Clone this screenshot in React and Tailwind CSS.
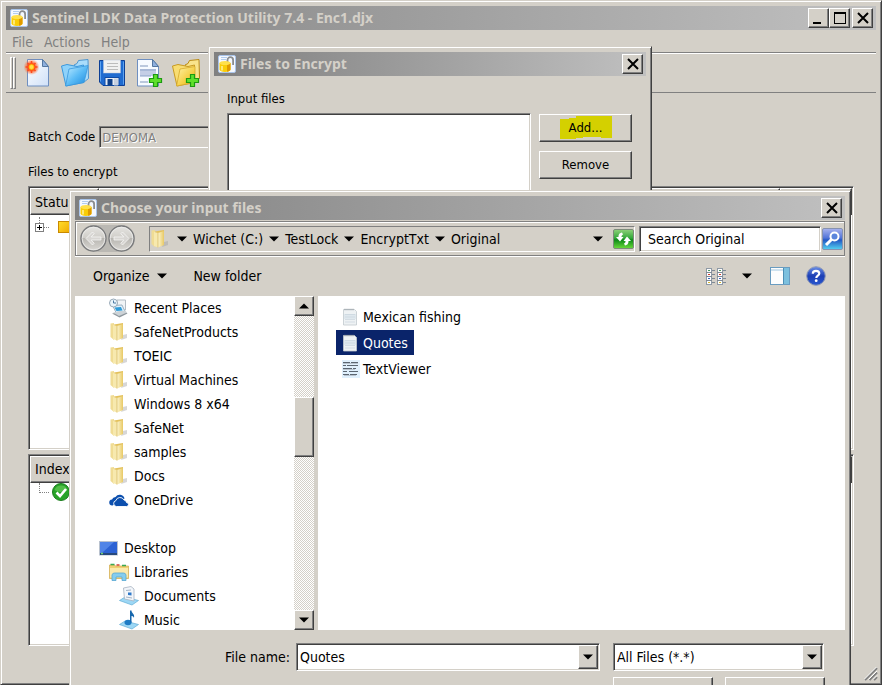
import React, { useState } from 'react';
import clsx from 'clsx';

const RAISED = 'border border-t-white border-l-white border-r-[#404040] border-b-[#404040] shadow-[inset_-1px_-1px_0_#808080]';
const SUNKEN = 'border border-t-[#808080] border-l-[#808080] border-r-white border-b-white shadow-[inset_1px_1px_0_#404040,inset_-1px_-1px_0_#d4d0c8]';
const THIN = 'border border-t-[#808080] border-l-[#808080] border-r-white border-b-white';

/* ---------- icons ---------- */

const AppIcon = () => (
  <svg viewBox="0 0 18 18" className="w-[18px] h-[18px] shrink-0">
    <rect x="0.5" y="0.5" width="17" height="17" rx="1.5" fill="#f4f8ff" stroke="#a9c4ea" />
    <path d="M3 2.500h6M3 4.500h5" stroke="#b3cdee" />
    <path d="M9.500 7.500V5a2.800 2.800 0 0 1 5.600 0v5" fill="none" stroke="#8b8d90" strokeWidth="1.800" />
    <path d="M1.500 8v6.500c0 1.400 2.500 2.500 5.500 2.500s5.500-1.100 5.500-2.500V8z" fill="#f9cd08" />
    <path d="M9 9.500v7.300c2-.4 3.500-1.300 3.500-2.300V8z" fill="#e09a00" />
    <ellipse cx="7" cy="8" rx="5.500" ry="2.100" fill="#ffe04a" />
    <path d="M4 11v4.500" stroke="#fff09a" strokeWidth="1.500" />
  </svg>
);

const CloseGlyph = () => (
  <svg viewBox="0 0 12 12" className="w-3 h-3">
    <path d="M1 1l10 10M11 1L1 11" stroke="#000" strokeWidth="2" />
  </svg>
);

const MinGlyph = () => (
  <svg viewBox="0 0 12 12" className="w-3 h-3">
    <path d="M0 11h8" stroke="#000" strokeWidth="2" />
  </svg>
);

const MaxGlyph = () => (
  <svg viewBox="0 0 12 12" className="w-3 h-3" shapeRendering="crispEdges">
    <path d="M0.500 1v10.500h11V1" fill="none" stroke="#000" />
    <path d="M0 1h12" stroke="#000" strokeWidth="2" />
  </svg>
);

const Caret = ({ up }) => (
  <svg viewBox="0 0 10 6" className={clsx('w-[10px] h-[6px] shrink-0', up && 'rotate-180')}>
    <path d="M0 0.500h10L5 5.500z" fill="#000" />
  </svg>
);

const GreenPlus = () => (
  <path d="M18.500 15.500h4v4h4v4h-4v4h-4v-4h-4v-4h4z" fill="#5fe02c" stroke="#1d9a12" strokeWidth="1.200" />
);

const NewFileIcon = () => (
  <svg viewBox="0 0 28 28" className="w-7 h-7">
    <defs>
      <linearGradient id="newPaper" x1="0" y1="0" x2="1" y2="1">
        <stop offset="0" stopColor="#fff" />
        <stop offset="1" stopColor="#cfe0f8" />
      </linearGradient>
      <radialGradient id="spark">
        <stop offset="0.400" stopColor="#ff5a1c" />
        <stop offset="1" stopColor="#ff5a1c" stopOpacity="0" />
      </radialGradient>
    </defs>
    <path d="M3.500 .500h15l6 7v19.500h-21z" fill="url(#newPaper)" stroke="#6f8fc0" />
    <path d="M18.500 .500v7h6z" fill="#8fb0de" stroke="#55779f" />
    <circle cx="7.500" cy="8" r="8" fill="url(#spark)" />
    <path d="M7.500 2v12M1.500 8h12M3.500 4l8 8M11.500 4l-8 8" stroke="#ff4a1c" strokeWidth="1.500" />
    <circle cx="7.500" cy="8" r="3.500" fill="#ffb300" stroke="#ff4a1c" />
    <circle cx="7.500" cy="8" r="2" fill="#ffe14a" />
  </svg>
);

const OpenIcon = () => (
  <svg viewBox="0 0 28 28" className="w-7 h-7">
    <defs>
      <linearGradient id="openBlue" x1="0" y1="0" x2="1" y2="1">
        <stop offset="0" stopColor="#c3edff" />
        <stop offset="0.500" stopColor="#5cbcf6" />
        <stop offset="1" stopColor="#1887dc" />
      </linearGradient>
    </defs>
    <path d="M13 6l3-1.500 1.500-3L27 .500l.5 19-5 4z" fill="#a9dcfb" stroke="#4d95cf" />
    <path d="M.500 7L6 5.500 16 7.500 22.500 6v17.500L5 27z" fill="#8ed2fa" stroke="#3b98dc" />
    <path d="M4.500 27L8 10l19-3.500-4 17z" fill="url(#openBlue)" stroke="#3b98dc" strokeWidth=".8" />
  </svg>
);

const SaveIcon = () => (
  <svg viewBox="0 0 28 28" className="w-7 h-7">
    <path d="M1.500 1.500h25v25H5l-3.500-3.500z" fill="#1f6bd0" stroke="#0d3f95" />
    <path d="M2.500 2.500v20M25.500 2.500v23" stroke="#5ea3f0" />
    <rect x="5.500" y="1" width="17" height="13" fill="#f1f1f1" stroke="#b9c4d6" strokeWidth=".5" />
    <path d="M9 4.500h11M9 7.500h11M9 10.500h11" stroke="#bcbcbc" />
    <path d="M7 18.500h14v8H7z" fill="#e7edf5" stroke="#0f4ba5" />
    <path d="M9.500 20h5v6.500h-5z" fill="#0f4088" />
    <path d="M16 19.500h4v7h-4z" fill="#c6d0df" />
  </svg>
);

const AddFileIcon = () => (
  <svg viewBox="0 0 28 28" className="w-7 h-7">
    <path d="M2.500 .500h15l6 7v19.500h-21z" fill="#f6faff" stroke="#6f8fc0" />
    <path d="M17.500 .500v7h6z" fill="#8fb0de" stroke="#55779f" />
    <path d="M5 7h8M5 23h8" stroke="#a8b8d2" strokeWidth="1.500" />
    <path d="M5 10h16v7H5z" fill="#c4cee6" />
    <path d="M5 11h16M5 17h11" stroke="#8da3c8" />
    <GreenPlus />
  </svg>
);

const AddFolderIcon = () => (
  <svg viewBox="0 0 28 28" className="w-7 h-7">
    <defs>
      <linearGradient id="folderGold" x1="0" y1="0" x2="1" y2="1">
        <stop offset="0" stopColor="#fff3a8" />
        <stop offset="0.600" stopColor="#f5cf45" />
        <stop offset="1" stopColor="#d9a013" />
      </linearGradient>
    </defs>
    <path d="M13 6l3-1.500 1.500-3L27 .500l.5 19-5 4z" fill="#f9e48c" stroke="#b98a15" />
    <path d="M.500 7L6 5.500 16 7.500 22.500 6v17.500L5 27z" fill="#f8dd72" stroke="#c89a22" />
    <path d="M4.500 27L8 10l15-2.500v16z" fill="url(#folderGold)" stroke="#d6a92c" strokeWidth=".8" />
    <GreenPlus />
  </svg>
);

const FolderIcon = () => (
  <svg viewBox="0 0 20 20" className="w-5 h-5 shrink-0">
    <defs>
      <linearGradient id="leaf" x1="0" y1="0" x2="1" y2="0">
        <stop offset="0" stopColor="#fdf6d0" />
        <stop offset="1" stopColor="#e8c965" />
      </linearGradient>
    </defs>
    <path d="M12 18l6-2v-4l-4 1z" fill="#9a9a9a" opacity=".4" />
    <path d="M1.500 1.500L5 1v17l-3.500-3z" fill="#f0dc94" />
    <path d="M5 2.500l9-1.500v14.500L8 18z" fill="#e3c15c" />
    <path d="M4 3l4 1v14.500L4 17z" fill="#f7e9ae" />
    <path d="M8 4l6-2v14l-6 2.500z" fill="url(#leaf)" />
    <path d="M8 4v14.500" stroke="#cfab4d" strokeWidth=".6" />
  </svg>
);

const RecentIcon = () => (
  <svg viewBox="0 0 20 20" className="w-5 h-5 shrink-0">
    <path d="M8 2h8.500v10H8z" fill="#f1f4f6" stroke="#b3bcc4" />
    <path d="M3.500 7.500L13 7l3 6.500-9 1z" fill="#dff0fb" stroke="#8ba1b2" strokeWidth=".8" />
    <path d="M5.500 9.500L12 9l1.500 3.500-6 .5z" fill="#2d9bd8" />
    <path d="M3 15.500l13-2 2.500 2-8 4z" fill="#8e979d" />
    <path d="M4 14.500l12-2 2 2-8 3.500z" fill="#cdd3d7" />
    <circle cx="4.500" cy="5" r="4" fill="#e9f4fb" stroke="#98a9b6" />
    <path d="M4.500 2.500V5H7" fill="none" stroke="#4a78a0" />
  </svg>
);

const OneDriveIcon = () => (
  <svg viewBox="0 0 20 20" className="w-5 h-5 shrink-0">
    <path d="M3.500 15.500a3 3 0 0 1-.5-6A3.800 3.800 0 0 1 6.500 7 5 5 0 0 1 15.500 8.500z" fill="#0c4fae" />
    <path d="M7.500 16.500a3 3 0 0 1-.6-5.900 4.300 4.300 0 0 1 8-.7 3 3 0 0 1 2.600 2.600 2 2 0 0 1 0 4z" fill="#0c4fae" stroke="#fff" strokeWidth=".9" />
  </svg>
);

const DesktopIcon = () => (
  <svg viewBox="0 0 20 20" className="w-5 h-5 shrink-0">
    <rect x=".5" y="3.500" width="18" height="13.500" fill="#2c62d4" stroke="#b9c2cf" />
    <path d="M1 4h14L3 15H1z" fill="#5f93f0" opacity=".7" />
    <path d="M1 16h17" stroke="#27497c" strokeWidth="2" />
    <path d="M2 15.500h2" stroke="#6fd06b" strokeWidth="1.500" />
  </svg>
);

const LibrariesIcon = () => (
  <svg viewBox="0 0 20 20" className="w-5 h-5 shrink-0">
    <path d="M.500 3h5l1 1h13v12.500H.500z" fill="#f0cf72" stroke="#d1aa4c" strokeWidth=".7" />
    <path d="M1.500 2.500h4M13 3.500h4" stroke="#3aa852" strokeWidth="1.500" />
    <path d="M7.500 3h3" stroke="#d6402f" strokeWidth="1.500" />
    <path d="M1 6h18v9.500H1z" fill="#fbe9ac" />
    <path d="M3 18.500v-5.500a2.500 2.500 0 0 1 2.500-2h9a2.500 2.500 0 0 1 2.500 2v5.500h-4V15H7v3.500z" fill="#86cdee" stroke="#58a7d2" strokeWidth=".8" />
  </svg>
);

const DocumentsIcon = () => (
  <svg viewBox="0 0 20 20" className="w-5 h-5 shrink-0">
    <path d="M.500 14.500L6 11l13.500 3.500-6.500 4.500z" fill="#9cd7f5" stroke="#62add6" strokeWidth=".7" />
    <path d="M4.500 2L12 .500l3 2.500v12L5.500 13z" fill="#f3f6fa" stroke="#a7b3c0" strokeWidth=".8" />
    <path d="M7 4.500l5-.500M7 11l6 1" stroke="#a4b4c6" />
    <path d="M9 6.500h3.500v3L9 9z" fill="#2f79c9" />
  </svg>
);

const MusicIcon = () => (
  <svg viewBox="0 0 20 20" className="w-5 h-5 shrink-0">
    <path d="M.500 14.500L6 11l13.500 3.500-6.500 4.500z" fill="#9cd7f5" stroke="#62add6" strokeWidth=".7" />
    <ellipse cx="9" cy="12.500" rx="3.500" ry="2.700" fill="#1c7bc4" />
    <path d="M11 12.500V.500h1.500c0 3 3.500 3 2.500 7.500-.5-1.500-1.500-2-2.500-2v6.500z" fill="#1767ad" />
  </svg>
);

const NotepadIcon = () => (
  <svg viewBox="0 0 16 18" className="w-4 h-[18px] shrink-0">
    <path d="M1.500 1.500h11l2 2v13.500h-13z" fill="#eef2f4" stroke="#c2c9ce" strokeWidth=".8" />
    <path d="M2 6h12v5H2z" fill="#dfe8ee" />
    <path d="M3 6.500h10M3 9h10M3 11.500h10M3 14h10" stroke="#c8d4dc" strokeWidth=".7" />
    <path d="M2.500 1.500h9" stroke="#8f979c" strokeWidth="1.500" strokeDasharray="1 1" />
  </svg>
);

const TextDocIcon = () => (
  <svg viewBox="0 0 18 18" className="w-[18px] h-[18px] shrink-0" shapeRendering="crispEdges">
    <rect width="18" height="18" fill="#e0f0fd" />
    <path d="M1 2.500h7M9 2.500h7M1 5.500h3M5 5.500h11M1 8.500h9M11 8.500h3M1 11.500h4M7 11.500h9M1 14.500h6M8 14.500h7" stroke="#5b6672" />
    <path d="M1 3.500h15M1 9.500h12M2 15.500h12" stroke="#b9c5d1" />
  </svg>
);

const NavArrow = ({ flip }) => (
  <svg viewBox="0 0 27 27" className={clsx('w-[27px] h-[27px]', flip && 'rotate-y-180')}>
    <defs>
      <linearGradient id="navGrey" x1="0" y1="0" x2="0" y2="1">
        <stop offset="0" stopColor="#e6e5e2" />
        <stop offset="0.490" stopColor="#cfcdc8" />
        <stop offset="0.500" stopColor="#b8b6b1" />
        <stop offset="1" stopColor="#dbd9d5" />
      </linearGradient>
    </defs>
    <circle cx="13.500" cy="13.500" r="12.500" fill="url(#navGrey)" stroke="#77787a" strokeWidth="1.300" />
    <circle cx="13.500" cy="13.500" r="11.300" fill="none" stroke="#eeeeec" strokeWidth=".8" />
    <path d="M6 13.500l6.500-6.500 1.700 1.700-3 3.300H21v3h-9.800l3 3.300-1.700 1.700z" fill="#d8d6d3" stroke="#f6f6f5" strokeWidth=".8" />
  </svg>
);

const RefreshIcon = () => (
  <svg viewBox="0 0 21 20" className="w-[21px] h-5">
    <defs>
      <linearGradient id="refreshGreen" x1="0" y1="0" x2="0" y2="1">
        <stop offset="0" stopColor="#8ed27a" />
        <stop offset="0.450" stopColor="#34a83a" />
        <stop offset="0.550" stopColor="#0d8a17" />
        <stop offset="1" stopColor="#6bdc3a" />
      </linearGradient>
    </defs>
    <rect x=".5" y=".5" width="20" height="19" rx="1.500" fill="url(#refreshGreen)" stroke="#7d8b7a" />
    <path d="M9 3.500C6 4 5.500 6 5.500 8H3l4 4.500L10.500 8H8.500c0-1.500.5-2 1.500-2.500z" fill="#fff" />
    <path d="M12 16.500c3-.5 3.500-2.500 3.500-4.500H18l-4-4.500L10.500 12h2c0 1.500-.5 2-1.500 2.500z" fill="#fff" />
  </svg>
);

const SearchIcon = () => (
  <svg viewBox="0 0 21 22" className="w-[21px] h-[22px]">
    <defs>
      <linearGradient id="searchBlue" x1="0" y1="0" x2="0" y2="1">
        <stop offset="0" stopColor="#a9b3ee" />
        <stop offset="0.450" stopColor="#5274d8" />
        <stop offset="0.550" stopColor="#2158c4" />
        <stop offset="1" stopColor="#55d3f2" />
      </linearGradient>
    </defs>
    <rect x=".5" y=".5" width="20" height="21" rx="1.500" fill="url(#searchBlue)" stroke="#8792b0" />
    <circle cx="12.500" cy="8.500" r="4" fill="#5c86dc" stroke="#fff" strokeWidth="2" />
    <path d="M9.500 11.500L4 17" stroke="#fff" strokeWidth="3" />
  </svg>
);

const ViewsIcon = () => (
  <svg viewBox="0 0 20 17" className="w-5 h-[17px]" shapeRendering="crispEdges">
    {[0, 11].map((x) => (
      <g key={x} transform={`translate(${x} 0)`}>
        <rect x=".5" y=".5" width="5" height="16" fill="#fff" stroke="#8f9aa6" />
        <path d="M0 4.500h6M0 8.500h6M0 12.500h6M6 2.500h3M6 6.500h3M6 10.500h3M6 14.500h3" stroke="#7f8a96" />
        <path d="M2 2.500h2" stroke="#4c9a58" />
        <path d="M2 6.500h2" stroke="#d03a2c" />
        <path d="M2 10.500h2" stroke="#3a68c0" />
        <path d="M2 14.500h2" stroke="#d6b52a" />
      </g>
    ))}
  </svg>
);

const PreviewIcon = () => (
  <svg viewBox="0 0 20 18" className="w-5 h-[18px]" shapeRendering="crispEdges">
    <rect x=".5" y=".5" width="19" height="17" fill="#fdfdfd" stroke="#6a9cc0" />
    <path d="M1 2.500h13" stroke="#cfe2ef" strokeWidth="2" />
    <rect x="13" y="1" width="6" height="16" fill="#7cc0de" />
    <path d="M13.500 1v16" stroke="#4d8fb5" />
  </svg>
);

const HelpIcon = () => (
  <svg viewBox="0 0 20 20" className="w-5 h-5">
    <defs>
      <linearGradient id="helpBlue" x1="0" y1="0" x2="0" y2="1">
        <stop offset="0" stopColor="#6b8fe8" />
        <stop offset="0.500" stopColor="#1c3eb4" />
        <stop offset="1" stopColor="#2a58d0" />
      </linearGradient>
    </defs>
    <circle cx="10" cy="10" r="9.300" fill="url(#helpBlue)" stroke="#8f99b5" />
    <path d="M6.800 7.800C6.800 5.800 8 4.800 10 4.800s3.300 1 3.300 2.700c0 2.200-3 2.200-3 4.500" fill="none" stroke="#fff" strokeWidth="2.200" />
    <circle cx="10.200" cy="14.700" r="1.400" fill="#fff" />
  </svg>
);

const CheckIcon = () => (
  <svg viewBox="0 0 18 18" className="w-[18px] h-[18px] shrink-0">
    <circle cx="9" cy="9" r="8.500" fill="#27a327" stroke="#1a7c1c" />
    <path d="M2.500 7a7 7 0 0 1 13 0c-4 2.500-9 2.500-13 0z" fill="#6fd05e" opacity=".6" />
    <path d="M4.500 9.500l3.500 3.500 6-7" fill="none" stroke="#fff" strokeWidth="2.600" />
  </svg>
);

/* ---------- window chrome ---------- */

const Window = ({ className, children }) => (
  <div className={clsx('flex flex-col p-1 bg-[#d4d0c8] border border-t-[#d4d0c8] border-l-[#d4d0c8] border-r-[#404040] border-b-[#404040] shadow-[inset_1px_1px_0_#fff,inset_-1px_-1px_0_#808080]', className)}>
    <div className="flex-1 min-h-0 flex flex-col p-px">{children}</div>
  </div>
);

const CaptionButton = ({ label, children }) => (
  <button aria-label={label} className={clsx('w-[21px] h-5 flex items-center justify-center bg-[#d4d0c8]', RAISED)}>
    {children}
  </button>
);

const TitleBar = ({ title, full }) => (
  <div className="h-6 shrink-0 flex items-center pl-1 pr-[3px] bg-linear-to-r from-[#808080] to-[#c0c0c0]">
    <AppIcon />
    <h2 className="flex-1 pl-1 font-['Noto_Sans',sans-serif] text-[14px] leading-5 font-bold text-[#d4d0c8] whitespace-nowrap">{title}</h2>
    {full && (
      <div className="flex mr-[2px]">
        <CaptionButton label="Minimize"><MinGlyph /></CaptionButton>
        <CaptionButton label="Maximize"><MaxGlyph /></CaptionButton>
      </div>
    )}
    <CaptionButton label="Close"><CloseGlyph /></CaptionButton>
  </div>
);

const PushButton = ({ className, children, ...props }) => (
  <button className={clsx('flex items-center justify-center bg-[#d4d0c8]', RAISED, className)} {...props}>{children}</button>
);

/* ---------- main window ---------- */

const TOOLS = [
  { label: 'New', Icon: NewFileIcon },
  { label: 'Open', Icon: OpenIcon },
  { label: 'Save', Icon: SaveIcon },
  { label: 'Add file', Icon: AddFileIcon },
  { label: 'Add folder', Icon: AddFolderIcon },
];

const TH = 'h-[27px] px-1 text-left font-normal border-t border-l border-white border-r border-r-[#404040] border-b border-b-[#404040] shadow-[inset_-1px_-1px_0_#808080]';

const GridPanel = ({ columns, className, children }) => (
  <div className={clsx('min-h-0 overflow-hidden bg-white', SUNKEN, className)}>
    <table className="w-full table-fixed border-separate border-spacing-0 p-px">
      <thead className="bg-[#d4d0c8] text-[14px] leading-5">
        <tr>
          {columns.map((col, i) => (
            <th key={i} className={clsx(TH, col.width)}>{col.name}</th>
          ))}
        </tr>
      </thead>
      <tbody>
        <tr><td colSpan={columns.length}>{children}</td></tr>
      </tbody>
    </table>
  </div>
);

const MainWindow = () => (
  <Window className="h-full">
    <TitleBar title="Sentinel LDK Data Protection Utility 7.4 - Enc1.djx" full />
    <nav className="h-[22px] shrink-0 flex items-center gap-[11px] px-[6px] pt-px text-[14px] leading-5 text-[#808080]">
      <button>File</button>
      <button>Actions</button>
      <button>Help</button>
    </nav>
    <div className="h-[41px] shrink-0 flex items-center gap-2 pl-1 border-t border-b border-[#808080] shadow-[inset_0_1px_0_#fff]">
      <div className="flex h-8">
        <span className="w-[3px] border border-t-white border-l-white border-r-[#808080] border-b-[#808080]" />
        <span className="w-[3px] border border-t-white border-l-white border-r-[#808080] border-b-[#808080]" />
      </div>
      <div className="flex gap-[9px]">
        {TOOLS.map(({ label, Icon }) => (
          <button key={label} aria-label={label}><Icon /></button>
        ))}
      </div>
    </div>

    <div className="flex-1 min-h-0 flex flex-col px-[22px] pt-[33px] pb-[33px]">
      <div className="flex items-center gap-1 shrink-0">
        <label htmlFor="batch">Batch Code</label>
        <input
          id="batch"
          disabled
          defaultValue="DEMOMA"
          className={clsx('w-[200px] h-[22px] px-[2px] text-[#808080] [text-shadow:1px_1px_0_#fff]', SUNKEN)}
        />
      </div>
      <h3 className="mt-[14px] mb-1 shrink-0">Files to encrypt</h3>
      <GridPanel
        className="flex-[11]"
        columns={[{ name: 'Status', width: 'w-[69px]' }, { name: '' }, { name: '', width: 'w-[72px]' }]}
      >
        <div className="flex items-center pl-1">
          <div className="flex flex-col items-center w-[10px]">
            <span className="h-[6px] border-l border-dotted border-[#808080]" />
            <span className="w-[9px] h-[9px] border border-[#808080] flex items-center justify-center">
              <svg viewBox="0 0 5 5" className="w-[5px] h-[5px]" shapeRendering="crispEdges">
                <path d="M0 2.500h5M2.500 0v5" stroke="#000" />
              </svg>
            </span>
          </div>
          <span className="w-[5px] mt-[6px] border-t border-dotted border-[#808080]" />
          <span className="ml-[9px] mt-[6px] w-3 h-3 bg-linear-to-br from-[#ffdc28] to-[#f0ac00] border border-[#c98a00]" />
        </div>
      </GridPanel>
      <GridPanel className="flex-[8] mt-1" columns={[{ name: 'Index' }]}>
        <div className="flex items-start pl-[9px]">
          <span className="w-[10px] h-[10px] border-l border-b border-dotted border-[#808080]" />
          <span className="ml-[3px]"><CheckIcon /></span>
        </div>
      </GridPanel>
    </div>

    <svg viewBox="0 0 14 14" className="absolute right-1 bottom-1 w-[14px] h-[14px]">
      <path d="M1 13L13 1M5.500 13L13 5.500M10 13l3-3" stroke="#808080" strokeWidth="2" />
      <path d="M0 12.500L12.500 0M4.500 12.500L13 4M9 12.500L13 8.500" stroke="#fff" />
    </svg>
  </Window>
);

/* ---------- files to encrypt ---------- */

const EncryptDialog = () => (
  <Window className="absolute left-[208px] top-[46px] w-[444px] h-[240px]">
    <TitleBar title="Files to Encrypt" />
    <div className="flex-1 flex flex-col pl-[13px] pr-[14px] py-3">
      <label htmlFor="inputFiles" className="mt-px mb-1">Input files</label>
      <div className="flex-1 flex gap-2">
        <div id="inputFiles" role="listbox" className={clsx('flex-1 bg-white', SUNKEN)} />
        <div className="flex flex-col gap-[9px] w-[93px] pt-px">
          <PushButton className="relative h-7">
            <svg viewBox="0 0 52 24" className="absolute w-[52px] h-6">
              <path d="M0 3h9V2h7V0h36v22H41v-1H23v1h-7v1H0z" fill="#d4d000" />
            </svg>
            <span className="relative">Add...</span>
          </PushButton>
          <PushButton className="h-7">Remove</PushButton>
        </div>
      </div>
    </div>
  </Window>
);

/* ---------- file chooser ---------- */

const CRUMBS = ['Wichet (C:)', 'TestLock', 'EncryptTxt', 'Original'];

const PLACES = [
  { name: 'Recent Places', Icon: RecentIcon, indent: 'pl-[34px]' },
  { name: 'SafeNetProducts', Icon: FolderIcon, indent: 'pl-[34px]' },
  { name: 'TOEIC', Icon: FolderIcon, indent: 'pl-[34px]' },
  { name: 'Virtual Machines', Icon: FolderIcon, indent: 'pl-[34px]' },
  { name: 'Windows 8 x64', Icon: FolderIcon, indent: 'pl-[34px]' },
  { name: 'SafeNet', Icon: FolderIcon, indent: 'pl-[34px]' },
  { name: 'samples', Icon: FolderIcon, indent: 'pl-[34px]' },
  { name: 'Docs', Icon: FolderIcon, indent: 'pl-[34px]' },
  { name: 'OneDrive', Icon: OneDriveIcon, indent: 'pl-[34px]' },
  null,
  { name: 'Desktop', Icon: DesktopIcon, indent: 'pl-6' },
  { name: 'Libraries', Icon: LibrariesIcon, indent: 'pl-[34px]' },
  { name: 'Documents', Icon: DocumentsIcon, indent: 'pl-11' },
  { name: 'Music', Icon: MusicIcon, indent: 'pl-11' },
];

const FILES = [
  { name: 'Mexican fishing', Icon: NotepadIcon },
  { name: 'Quotes', Icon: NotepadIcon },
  { name: 'TextViewer', Icon: TextDocIcon },
];

const TRACK = 'bg-[repeating-conic-gradient(#d4d0c8_0_25%,#fff_0_50%)] bg-size-[2px_2px]';

const ScrollBar = () => (
  <div className="w-5 shrink-0 flex flex-col">
    <PushButton aria-label="Scroll up" className="h-5"><Caret up /></PushButton>
    <div className={clsx('flex-[82]', TRACK)} />
    <div className={clsx('flex-[58] bg-[#d4d0c8]', RAISED)} />
    <div className={clsx('flex-[154]', TRACK)} />
    <PushButton aria-label="Scroll down" className="h-5"><Caret /></PushButton>
  </div>
);

const ChooseDialog = () => {
  const [selected, setSelected] = useState('Quotes');

  return (
    <Window className="absolute left-[69px] right-[31px] top-[190px] text-[14px] leading-5">
      <TitleBar title="Choose your input files" />

      {/* Address bar */}
      <div className="mt-px h-[35px] shrink-0 flex items-center pl-1 pr-px border border-[#808080] shadow-[inset_1px_1px_0_#fff,0_1px_0_#fff]">
        <div className="flex gap-px rounded-full bg-[#bab8b3]">
          <button aria-label="Back"><NavArrow /></button>
          <button aria-label="Forward"><NavArrow flip /></button>
        </div>
        <div className={clsx('flex-1 ml-[14px] h-[26px] flex items-center', THIN)}>
          <FolderIcon />
          {CRUMBS.map((crumb, i) => (
            <button key={crumb} className={clsx('flex items-center gap-[6px] whitespace-nowrap', i === 0 ? 'ml-[7px]' : 'ml-[6px]')}>
              <Caret />
              {crumb}
            </button>
          ))}
          <button aria-label="Previous locations" className="ml-auto mr-[10px]"><Caret /></button>
          <button aria-label="Refresh"><RefreshIcon /></button>
        </div>
        <input
          aria-label="Search"
          placeholder="Search Original"
          className={clsx('ml-1 w-[182px] h-[26px] px-2 bg-white placeholder-black outline-none', SUNKEN)}
        />
        <button aria-label="Go" className="ml-px"><SearchIcon /></button>
      </div>

      {/* Command bar */}
      <div className="h-10 shrink-0 flex items-center pl-[18px] pr-[19px]">
        <button className="flex items-center gap-2">Organize <Caret /></button>
        <button className="ml-[26px]">New folder</button>
        <button aria-label="Views" className="ml-auto flex items-center gap-4"><ViewsIcon /><Caret /></button>
        <button aria-label="Preview pane" className="ml-[18px]"><PreviewIcon /></button>
        <button aria-label="Help" className="ml-4"><HelpIcon /></button>
      </div>

      <div className="h-[334px] shrink-0 flex">
        <ul className="w-[219px] shrink-0 overflow-hidden bg-white">
          {PLACES.map((place, i) => (
            <li key={i} className={clsx('h-6 flex items-center gap-[5px]', place && place.indent)}>
              {place && (
                <>
                  <place.Icon />
                  {place.name}
                </>
              )}
            </li>
          ))}
        </ul>
        <ScrollBar />
        <ul className="flex-1 ml-1 pl-[18px] pt-2 bg-white">
          {FILES.map(({ name, Icon }) => (
            <li key={name} className="h-[26px] flex">
              <button
                onClick={() => setSelected(name)}
                className={clsx('h-[25px] flex items-center px-[6px]', selected === name && 'bg-[#0a246a] text-white')}
              >
                <span className="w-[21px]"><Icon /></span>
                {name}
              </button>
            </li>
          ))}
        </ul>
      </div>

      {/* Footer */}
      <div className="pt-[13px] pr-[21px] flex items-center">
        <label htmlFor="fileName" className="flex-1 text-right pr-[6px]">File name:</label>
        <div className={clsx('w-[304px] h-7 p-px flex bg-white', SUNKEN)}>
          <input
            id="fileName"
            value={selected}
            onChange={(e) => setSelected(e.target.value)}
            className="flex-1 min-w-0 px-[2px] outline-none"
          />
          <PushButton aria-label="Recent names" className="w-5"><Caret /></PushButton>
        </div>
        <div className={clsx('ml-[13px] w-[211px] h-7 p-px flex bg-white', SUNKEN)}>
          <select aria-label="File type" className="flex-1 appearance-none px-[2px] outline-none">
            <option>All Files (*.*)</option>
          </select>
          <span className={clsx('w-5 flex items-center justify-center bg-[#d4d0c8] pointer-events-none', RAISED)}><Caret /></span>
        </div>
      </div>
      <div className="mt-[6px] pr-5 flex justify-end gap-3">
        <PushButton aria-label="Open" className="w-[100px] h-7" />
        <PushButton aria-label="Cancel" className="w-[100px] h-7" />
      </div>
    </Window>
  );
};

export default function App() {
  return (
    <div className="relative h-screen overflow-hidden bg-[#d4d0c8] text-black text-[13px] leading-5 font-['Tahoma','DejaVu_Sans_Condensed','DejaVu_Sans',sans-serif]">
      <MainWindow />
      <EncryptDialog />
      <ChooseDialog />
    </div>
  );
}
